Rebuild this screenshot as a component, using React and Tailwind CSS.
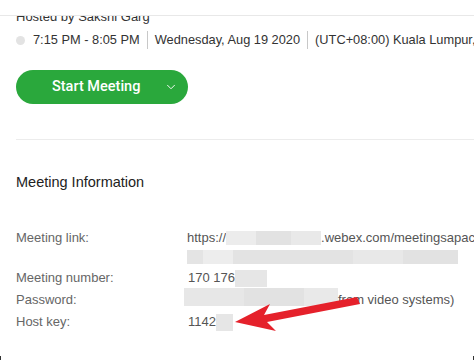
import { ChevronDown } from 'lucide-react';

const sans = { fontFamily: '"Liberation Sans", Arial, sans-serif' };

const Blur = ({ className }) => (
  <span className={`inline-block shrink-0 bg-[#e6e6e6] ${className}`} />
);

const Row = ({ label, children, className = '' }) => (
  <div className={`flex items-center h-[22px] ${className}`}>
    <div className="w-[171px] shrink-0 text-[13px] text-[#666]">{label}</div>
    <div className="flex items-center whitespace-nowrap text-[13px] text-[#555]">{children}</div>
  </div>
);

export default function App() {
  return (
    <div className="relative w-[474px] h-[360px] overflow-hidden bg-white flex flex-col" style={sans}>
      {/* sticky header edge */}
      <div className="h-[16px] shrink-0 border-b border-[#e8e8e8] bg-white" />

      <div className="pl-4 h-[8px] overflow-hidden">
        <div className="-mt-[7px] text-[13px] leading-[16px] text-[#333]">Hosted by Sakshi Garg</div>
      </div>

      {/* time row */}
      <div className="mt-[7px] h-[18px] flex items-center pl-4 text-[12.8px] text-[#333] whitespace-nowrap">
        <span className="shrink-0 w-[9px] h-[9px] rounded-full bg-[#e3e3e3] mr-[8px]" />
        <span className="shrink-0">7:15 PM - 8:05 PM</span>
        <span className="shrink-0 mx-[7px] w-px h-[18px] bg-[#c8c8c8]" />
        <span className="shrink-0">Wednesday, Aug 19 2020</span>
        <span className="shrink-0 mx-[7px] w-px h-[18px] bg-[#c8c8c8]" />
        <span className="shrink-0">(UTC+08:00) Kuala Lumpur, Singapore</span>
      </div>

      {/* start meeting button */}
      <div className="mt-[21px] pl-4">
        <button className="w-[172px] h-[34px] rounded-full bg-[#2aa83c] text-white flex items-center">
          <span
            className="pl-[36px] text-[14.5px] font-medium"
            style={{ fontFamily: 'Roboto, "Liberation Sans", sans-serif' }}
          >
            Start Meeting
          </span>
          <ChevronDown className="ml-auto mr-[10px] w-[14px] h-[14px]" strokeWidth={1.6} />
        </button>
      </div>

      <div className="mt-[35px] ml-4 h-px bg-[#ececec]" />

      <div className="mt-[33px] pl-4 h-[20px] flex items-center text-[14.5px] text-[#222]">
        Meeting Information
      </div>

      <div className="pl-4">
        <div className="mt-[36px] flex items-center h-[18px]">
          <div className="w-[171px] shrink-0 text-[13px] text-[#666]">Meeting link:</div>
          <div className="flex items-center whitespace-nowrap text-[13px] text-[#555]">
            <span className="shrink-0">https://</span>
            <span className="shrink-0 inline-flex h-[14px]">
              <span className="w-[30px] bg-[#ececec]" />
              <span className="w-[35px] bg-[#e2e2e2]" />
              <span className="w-[30px] bg-[#e9e9e9]" />
            </span>
            <span className="shrink-0">.webex.com/meetingsapac/j.php</span>
          </div>
        </div>
        <div className="mt-[3px] ml-[171px] flex h-[14px] w-[271px]">
          <span className="w-[16px] bg-[#e4e4e4]" />
          <span className="w-[30px] bg-[#ededed]" />
          <span className="w-[120px] bg-[#e3e3e3]" />
          <span className="w-[50px] bg-[#e8e8e8]" />
          <span className="flex-1 bg-[#e2e2e2]" />
        </div>

        <Row label="Meeting number:" className="mt-[3px]">
          <span className="ml-px">170 176</span>
          <Blur className="w-[32px] h-[17px]" />
        </Row>
        <Row label="Password:">
          <span className="shrink-0 -ml-[3px] mb-[6px] inline-flex h-[18px]">
            <span className="w-[60px] bg-[#e7e7e7]" />
            <span className="w-[60px] bg-[#e2e2e2]" />
            <span className="w-[34px] bg-[#e9e9e9]" />
          </span>
          <span>from video systems)</span>
        </Row>
        <Row label="Host key:">
          <span className="ml-px">1142</span>
          <Blur className="w-[17px] h-[17px]" />
        </Row>
      </div>

      <div className="mt-auto h-[4px] border-x border-[#333]" />

      {/* red annotation arrow */}
      <svg className="absolute left-0 top-0" width="474" height="360" viewBox="0 0 474 360">
        <polygon
          points="235,322 270,304 264,315 357,297 360,304 267,322 276,331"
          fill="#e5212b"
        />
      </svg>
    </div>
  );
}
